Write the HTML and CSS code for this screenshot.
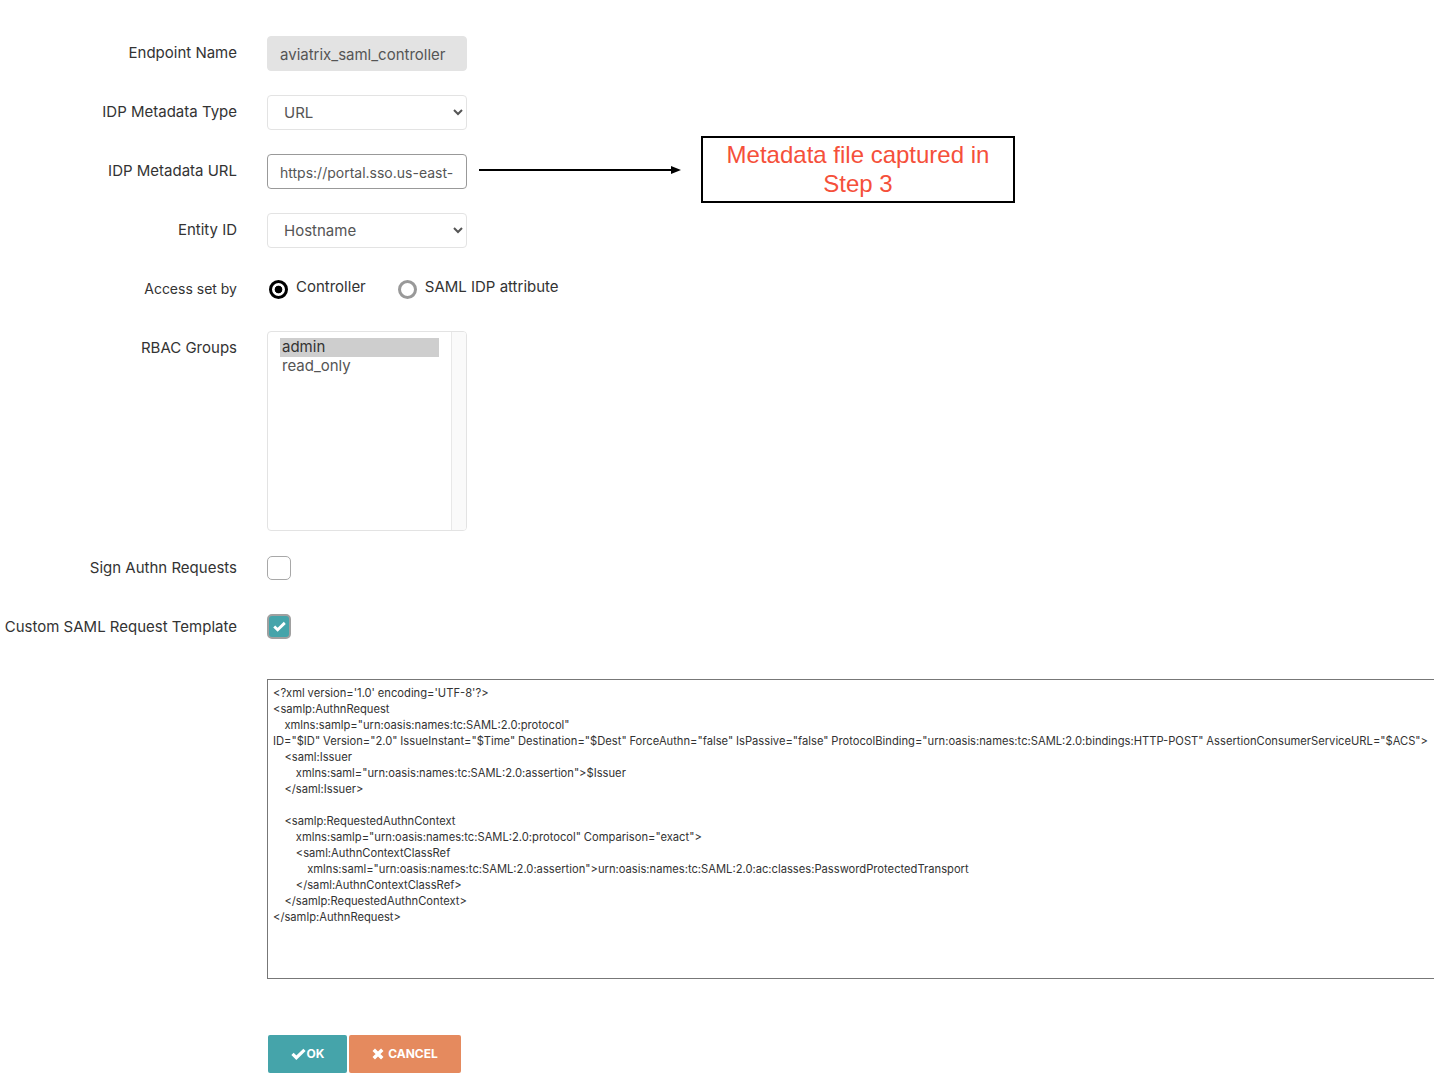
FILE: index.html
```html
<!DOCTYPE html>
<html lang="en">
<head>
<meta charset="utf-8">
<title>SAML Endpoint</title>
<link rel="stylesheet" href="styles.css">
</head>
<body>
<form class="form">
  <div class="row r-field">
    <div class="label">Endpoint Name</div>
    <div class="input disabled">aviatrix_saml_controller</div>
  </div>
  <div class="row r-field">
    <div class="label">IDP Metadata Type</div>
    <select class="select"><option>URL</option></select>
  </div>
  <div class="row r-field">
    <div class="label">IDP Metadata URL</div>
    <div class="input active">https://portal.sso.us-east-</div>
  </div>
  <div class="row r-field">
    <div class="label">Entity ID</div>
    <select class="select"><option>Hostname</option></select>
  </div>
  <div class="row r-radio">
    <div class="label narrow">Access set by</div>
    <div class="radios">
      <span class="radio-item"><span class="radio on"></span><span class="radio-text">Controller</span></span>
      <span class="radio-item"><span class="radio"></span><span class="radio-text">SAML IDP attribute</span></span>
    </div>
  </div>
  <div class="row r-list">
    <div class="label">RBAC Groups</div>
    <div class="listbox">
      <div class="options">
        <div class="option selected">admin</div>
        <div class="option">read_only</div>
      </div>
      <div class="rail"></div>
    </div>
  </div>
  <div class="row r-check">
    <div class="label">Sign Authn Requests</div>
    <span class="check"></span>
  </div>
  <div class="row r-check">
    <div class="label">Custom SAML Request Template</div>
    <span class="check checked">
      <svg viewBox="0 0 14 11" width="13" height="11"><path d="M1.3 5.4 5 9 12.7 1.6" fill="none" stroke="#fff" stroke-width="3"/></svg>
    </span>
  </div>
  <pre class="template">&lt;?xml version='1.0' encoding='UTF-8'?&gt;
&lt;samlp:AuthnRequest
    xmlns:samlp="urn:oasis:names:tc:SAML:2.0:protocol"
ID="$ID" Version="2.0" IssueInstant="$Time" Destination="$Dest" ForceAuthn="false" IsPassive="false" ProtocolBinding="urn:oasis:names:tc:SAML:2.0:bindings:HTTP-POST" AssertionConsumerServiceURL="$ACS"&gt;
    &lt;saml:Issuer
        xmlns:saml="urn:oasis:names:tc:SAML:2.0:assertion"&gt;$Issuer
    &lt;/saml:Issuer&gt;

    &lt;samlp:RequestedAuthnContext
        xmlns:samlp="urn:oasis:names:tc:SAML:2.0:protocol" Comparison="exact"&gt;
        &lt;saml:AuthnContextClassRef
            xmlns:saml="urn:oasis:names:tc:SAML:2.0:assertion"&gt;urn:oasis:names:tc:SAML:2.0:ac:classes:PasswordProtectedTransport
        &lt;/saml:AuthnContextClassRef&gt;
    &lt;/samlp:RequestedAuthnContext&gt;
&lt;/samlp:AuthnRequest&gt;</pre>
  <div class="actions">
    <button type="button" class="btn ok">
      <svg viewBox="0 0 14 11" width="15" height="12"><path d="M1.4 5.4 5 9 12.6 1.6" fill="none" stroke="#fff" stroke-width="3"/></svg>OK
    </button>
    <button type="button" class="btn cancel">
      <svg viewBox="0 0 11 11" width="12" height="12"><path d="M1.6 1.6 9.4 9.4M9.4 1.6 1.6 9.4" fill="none" stroke="#fff" stroke-width="3.2"/></svg>CANCEL
    </button>
  </div>
</form>

<svg class="arrow" viewBox="0 0 202 10" width="202" height="10"><path d="M0 5H193" stroke="#000" stroke-width="2"/><path d="M192 1 202 5 192 9Z" fill="#000"/></svg>
<div class="callout">Metadata file captured in<br>Step 3</div>
</body>
</html>
```
FILE: styles.css
```css
html, body {
  margin: 0;
  height: 1081px;
  overflow: hidden;
  background: #fff;
}
body {
  position: relative;
  font-family: "Inter", "Open Sans", sans-serif;
  color: #333;
}
.form {
  display: flex;
  flex-direction: column;
  padding-top: 36px;
  width: 1434px;
  overflow: hidden;
}
.row {
  display: flex;
  align-items: flex-start;
  gap: 30px;
}
.r-field { height: 35px; margin-bottom: 24px; }
.r-radio { height: 35px; margin-bottom: 24px; }
.r-list { height: 200px; margin-bottom: 25px; }
.r-check { height: 24px; margin-bottom: 35px; }
.label {
  width: 237px;
  flex: none;
  text-align: right;
  font-size: 15px;
  line-height: 20px;
  padding-top: 7px;
  color: #333;
  white-space: nowrap;
}
.label.narrow { font-size: 14px; }
.r-check .label { padding-top: 2px; }
.input {
  box-sizing: border-box;
  width: 200px;
  height: 35px;
  border: 1px solid #e3e3e3;
  border-radius: 4px;
  padding: 0 12px;
  font-size: 15px;
  line-height: 35px;
  color: #555;
  white-space: nowrap;
  overflow: hidden;
}
.input.disabled { background: #e3e3e3; }
.input.active { border-color: #999; font-size: 14px; }
.select {
  box-sizing: border-box;
  width: 200px;
  height: 35px;
  border: 1px solid #e3e3e3;
  border-radius: 4px;
  padding: 0 12px;
  font-family: inherit;
  font-size: 15px;
  color: #555;
  background: #fff;
}
.radios {
  display: flex;
  gap: 30px;
  padding-top: 7px;
}
.radio-item {
  display: flex;
  gap: 8px;
  align-items: flex-start;
}
.radio {
  box-sizing: border-box;
  margin: 1px 0 0 2px;
  width: 19px;
  height: 19px;
  border: 3px solid #999;
  border-radius: 50%;
  background: #fff;
}
.radio.on {
  border-color: #000;
  background: radial-gradient(circle, #000 0 3.5px, #fff 4.2px);
}
.radio-text {
  margin-top: -2px;
  font-size: 15px;
  line-height: 20px;
  color: #333;
}
.listbox {
  box-sizing: border-box;
  width: 200px;
  height: 200px;
  border: 1px solid #e3e3e3;
  border-radius: 4px;
  display: flex;
  overflow: hidden;
}
.options {
  flex: 1;
  padding: 6px 12px;
  font-size: 15px;
  line-height: 18px;
  color: #555;
}
.option { padding: 0 0 1px 2px; }
.option.selected { background: #cecece; color: #333; }
.rail {
  width: 14px;
  flex: none;
  background: #fafafa;
  border-left: 1px solid #e8e8e8;
}
.check {
  box-sizing: border-box;
  width: 24px;
  height: 24px;
  border: 1px solid #a8a8a8;
  border-radius: 5px;
  display: flex;
  align-items: center;
  justify-content: center;
  background: #fff;
}
.check.checked {
  height: 25px;
  margin-top: -1px;
  background: #45a4aa;
  border: 2px solid #a0a0a0;
}
.template {
  box-sizing: border-box;
  margin: 5px 0 0 267px;
  width: 1300px;
  height: 300px;
  flex: none;
  border: 1px solid #777;
  padding: 5px;
  font-family: "Inter", "Open Sans", sans-serif;
  font-size: 11.2px;
  word-spacing: -0.3px;
  line-height: 16px;
  color: #333;
  overflow: hidden;
  white-space: pre;
}
.actions {
  display: flex;
  gap: 2px;
  margin: 56px 0 0 268px;
}
.btn {
  height: 38px;
  border: 0;
  border-radius: 2px;
  color: #fff;
  font-family: inherit;
  font-size: 12px;
  font-weight: 700;
  line-height: 14px;
  display: flex;
  align-items: center;
  justify-content: center;
  padding: 0 0 1px;
}
.btn.ok { width: 79px; background: #45a4aa; gap: 1px; }
.btn.cancel { width: 112px; background: #e58a5e; gap: 4px; }
.arrow {
  position: absolute;
  left: 479px;
  top: 165px;
}
.callout {
  position: absolute;
  left: 701px;
  top: 136px;
  box-sizing: border-box;
  width: 314px;
  height: 67px;
  border: 2px solid #000;
  font-family: "Liberation Sans", sans-serif;
  font-size: 24px;
  line-height: 29px;
  color: #f5503a;
  text-align: center;
  padding-top: 2px;
}
```
